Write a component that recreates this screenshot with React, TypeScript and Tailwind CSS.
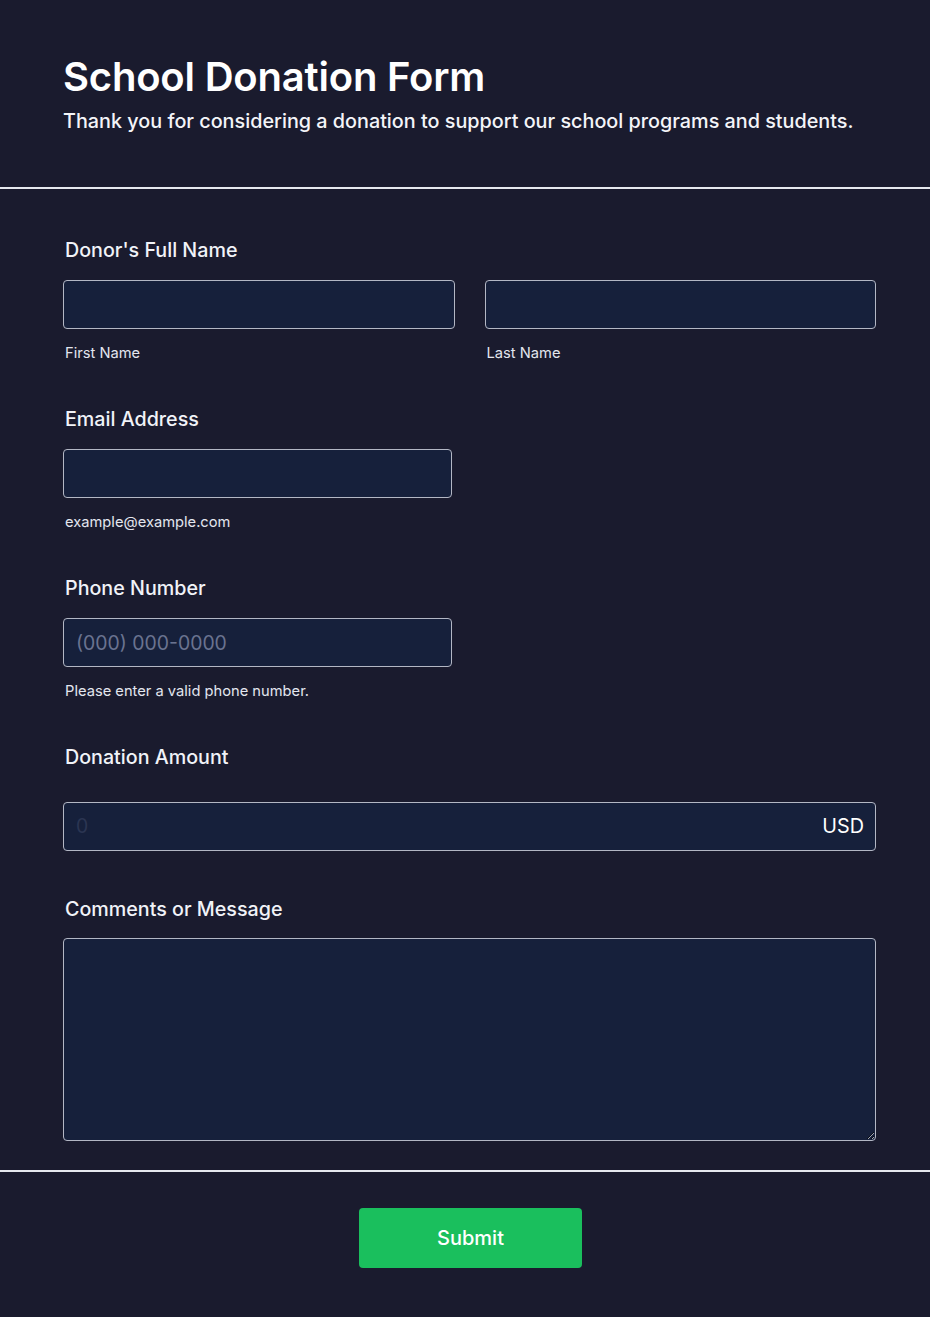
import React from 'react';

function Label({ children }: { children: React.ReactNode }) {
    return <div className="text-[19.7px] leading-[24px] font-medium text-[#f1f3f8] ml-[2px]">{children}</div>;
}

function Hint({ children }: { children: React.ReactNode }) {
    return <div className="text-[14.7px] leading-[18px] text-[#e3e6ee] ml-[2px] mt-[15px]">{children}</div>;
}

const inputCls =
    'h-[49px] rounded-[4px] border border-[#b3b7c4] bg-[#16203b] px-[12px] text-[19.4px] text-white outline-none placeholder:text-[#6a7390]';

export default function App() {
    return (
        <div className="bg-[#1a1b2e] min-h-screen w-[930px] font-['Inter',sans-serif] text-white">
            <div className="px-[63px] pt-[53px] pb-[54px]">
                <h1 className="text-[40px] leading-[48px] font-semibold tracking-[-0.2px]">School Donation Form</h1>
                <p className="text-[19.8px] leading-[24px] font-medium mt-[8px] text-[#f4f5f9]">
                    Thank you for considering a donation to support our school programs and students.
                </p>
            </div>
            <div className="h-[2px] bg-[#e6e8ee]" />

            <div className="pl-[63px] pr-[54px]">
                <form className="pt-[49px]" onSubmit={e => e.preventDefault()}>
                    <Label>Donor's Full Name</Label>
                    <div className="grid grid-cols-2 gap-[30px] mt-[18px]">
                        <div>
                            <input className={inputCls + ' w-full'} />
                            <Hint>First Name</Hint>
                        </div>
                        <div>
                            <input className={inputCls + ' w-full'} />
                            <Hint>Last Name</Hint>
                        </div>
                    </div>

                    <div className="mt-[45px]">
                        <Label>Email Address</Label>
                        <input className={inputCls + ' w-[389px] mt-[18px] block'} />
                        <Hint>example@example.com</Hint>
                    </div>

                    <div className="mt-[45px]">
                        <Label>Phone Number</Label>
                        <input className={inputCls + ' w-[389px] mt-[18px] block'} placeholder="(000) 000-0000" />
                        <Hint>Please enter a valid phone number.</Hint>
                    </div>

                    <div className="mt-[45px]">
                        <Label>Donation Amount</Label>
                        <div className={inputCls + ' w-full mt-[33px] flex items-center pr-[11px]'}>
                            <input className="flex-1 bg-transparent outline-none text-[19.4px] placeholder:text-[#2b3552]" placeholder="0" />
                            <span className="text-[19.8px] text-white">USD</span>
                        </div>
                    </div>

                    <div className="mt-[46px]">
                        <Label>Comments or Message</Label>
                        <textarea className="block w-full h-[203px] mt-[17px] rounded-[4px] border border-[#b3b7c4] bg-[#16203b] px-[12px] py-[10px] text-[19.4px] text-white outline-none" />
                    </div>
                </form>
            </div>

            <div className="h-[2px] bg-[#e6e8ee] mt-[29px]" />
            <div className="flex justify-center pl-[65px] pr-[54px] pt-[36px] pb-[49px]">
                <button className="w-[223px] h-[60px] rounded-[4px] bg-[#1abf5d] text-[20px] font-medium text-white">
                    Submit
                </button>
            </div>
        </div>
    );
}
